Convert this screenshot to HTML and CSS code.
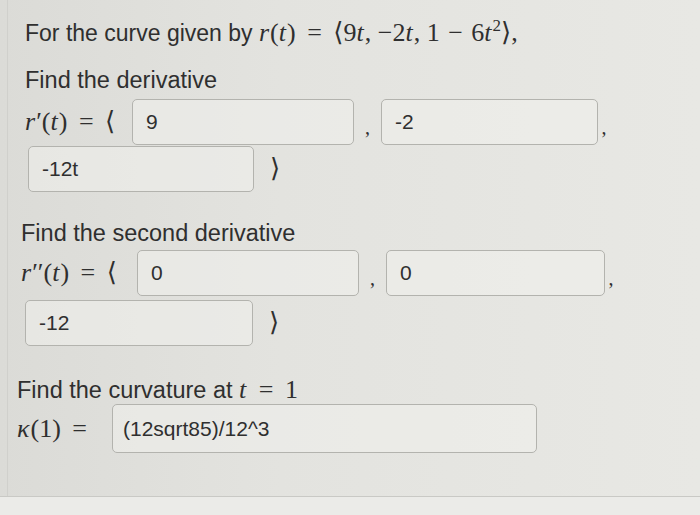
FILE: index.html
```html
<!DOCTYPE html>
<html>
<head>
<meta charset="utf-8">
<link rel="stylesheet" href="styles.css">
</head>
<body>
<div class="page">
  <p class="title">For the curve given by <span class="m"><i>r</i>(<i>t</i>) <span class="eq">=</span> ⟨9<i>t</i>, −2<i>t</i>, 1 <span class="op">−</span> 6<i>t</i><sup>2</sup>⟩,</span></p>

  <section class="q q1">
    <p class="label">Find the derivative</p>
    <div class="row">
      <span class="m lhs"><i>r</i>′(<i>t</i>) <span class="eq">=</span> ⟨</span>
      <div class="box b1">9</div>
      <span class="comma">,</span>
      <div class="box b2">-2</div>
      <span class="comma c-end">,</span>
    </div>
    <div class="row row2">
      <div class="box b3">-12t</div>
      <span class="m close">⟩</span>
    </div>
  </section>

  <section class="q q2">
    <p class="label">Find the second derivative</p>
    <div class="row">
      <span class="m lhs"><i>r</i>′′(<i>t</i>) <span class="eq">=</span> ⟨</span>
      <div class="box b1">0</div>
      <span class="comma">,</span>
      <div class="box b2">0</div>
      <span class="comma c-end">,</span>
    </div>
    <div class="row row2">
      <div class="box b3">-12</div>
      <span class="m close">⟩</span>
    </div>
  </section>

  <section class="q q3">
    <p class="label">Find the curvature at <span class="m"><i>t</i> <span class="eq">=</span> 1</span></p>
    <div class="row">
      <span class="m lhs"><i>κ</i>(1) <span class="eq">=</span></span>
      <div class="box wide">(12sqrt85)/12^3</div>
    </div>
  </section>

  <div class="rule"></div>
</div>
</body>
</html>
```

FILE: styles.css
```css
html, body {
  margin: 0;
  padding: 0;
}
body {
  width: 700px;
  height: 515px;
  overflow: hidden;
  background: linear-gradient(90deg, #dbdbd7 0%, #e3e3df 40%, #e8e8e4 100%);
  font-family: "Liberation Sans", Arial, sans-serif;
  color: #2f2f2f;
}
.page {
  position: relative;
  height: 515px;
  border-left: 1px solid #d0d0cc;
  margin-left: 7px;
  box-sizing: border-box;
}
p { margin: 0; }
.title {
  font-size: 23px;
  line-height: 30px;
  padding-top: 18px;
  padding-left: 17px;
}
.m {
  font-family: "Liberation Serif", "DejaVu Serif", serif;
  font-size: 26px;
  line-height: 26px;
  color: #2f2f2f;
}
.m i { font-style: italic; padding-right: 1px; }
.m sup { font-size: 17px; line-height: 0; vertical-align: 10px; }
.eq { padding: 0 5px; }
.op { padding: 0 2px; }
.label {
  font-size: 23.5px;
  line-height: 28px;
}
.q1 { margin-top: 18px; padding-left: 17px; }
.q1 .label { margin-bottom: 5px; }
.q2 { margin-top: 27px; padding-left: 13px; }
.q2 .label { margin-bottom: 3px; }
.q3 { margin-top: 30px; padding-left: 9px; }
.row {
  display: flex;
  align-items: center;
}
.row2 { margin-top: 1px; }
.q2 .row2 { margin-top: 4px; }
.lhs {
  width: 107px;
  flex: none;
  white-space: nowrap;
}
.q2 .lhs { width: 116px; }
.q3 .lhs { width: 95px; }
.box {
  box-sizing: border-box;
  height: 46px;
  border: 1.5px solid #b3b3ae;
  border-radius: 5px;
  background: rgba(240, 240, 237, 0.55);
  font-size: 21px;
  padding-left: 13px;
  display: flex;
  align-items: center;
  flex: none;
  color: #2f2f2f;
}
.b1 { width: 222px; }
.b2 { width: 217px; }
.q2 .b2 { width: 219px; }
.b3 { width: 226px; margin-left: 3px; }
.q2 .b3 { width: 228px; margin-left: 4px; }
.wide { width: 425px; height: 49px; padding-left: 10px; }
.comma {
  width: 27px;
  text-align: center;
  font-family: "Liberation Serif", serif;
  font-size: 20px;
  padding-top: 10px;
  flex: none;
}
.c-end { width: 12px; }
.close {
  margin-left: 16px;
  font-size: 26px;
}
.rule {
  position: absolute;
  left: -8px;
  right: 0;
  top: 496px;
  height: 19px;
  border-top: 1.5px solid #c9c9c5;
  background: #ebebe8;
}
```
